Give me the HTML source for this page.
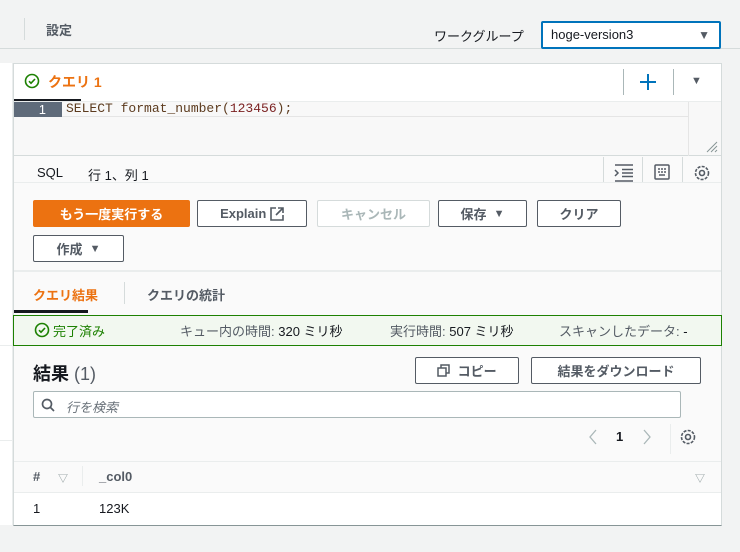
<!DOCTYPE html>
<html><head><meta charset="utf-8"><style>
*{box-sizing:border-box;margin:0;padding:0}
body{width:740px;height:552px;background:#f2f3f3;font-family:"Liberation Sans","Noto Sans CJK JP",sans-serif;color:#16191f;position:relative;overflow:hidden;font-size:13px}
.a{position:absolute}
.btn{position:absolute;border:1px solid #545b64;border-radius:2px;background:#fff;font-weight:bold;font-size:13px;display:flex;align-items:center;justify-content:center;color:#545b64}
.mono{font-family:"Liberation Mono",monospace}
</style></head><body>
<div class="a" style="left:0;top:0;width:740px;height:49px;border-bottom:1px solid #d5dbdb"></div>
<div class="a" style="left:24px;top:18px;width:1px;height:22px;background:#d5dbdb"></div>
<div class="a" style="left:46px;top:20px;font-size:13px;font-weight:bold;color:#545b64">設定</div>
<div class="a" style="left:434px;top:26px;font-size:13px">ワークグループ</div>
<div class="a" style="left:541px;top:21px;width:180px;height:28px;border:2px solid #0073bb;border-radius:2px;background:#fff;padding:0 8px;font-size:13px;line-height:24px">hoge-version3<span style="position:absolute;right:9px;top:0;font-size:12px;color:#545b64">▼</span></div>
<div class="a" style="left:0;top:63px;width:13px;height:462px;background:#fff;border-right:1px solid #eaeded"></div>
<div class="a" style="left:0;top:345px;width:13px;height:1px;background:#eaeded"></div>
<div class="a" style="left:0;top:440px;width:13px;height:1px;background:#eaeded"></div>
<div class="a" style="left:13px;top:63px;width:709px;height:463px;background:#fafafa;border:1px solid #d5dbdb;border-bottom-color:#879596"></div>
<!-- tabs -->
<div class="a" style="left:14px;top:64px;width:707px;height:38px;background:#fff;border-bottom:1px solid #eaeded"></div>
<svg class="a" style="left:24px;top:73px" width="16" height="16"><circle cx="8" cy="8" r="6.5" fill="none" stroke="#1d8102" stroke-width="1.6"/><path d="M5 8.2l2 2 4-4.2" fill="none" stroke="#1d8102" stroke-width="1.6"/></svg>
<div class="a" style="left:48px;top:72px;font-weight:bold;color:#ec7211;font-size:14px">クエリ 1</div>
<div class="a" style="left:14px;top:99px;width:67px;height:2px;background:#16191f"></div>
<div class="a" style="left:623px;top:69px;width:1px;height:26px;background:#aab7b8"></div>
<div class="a" style="left:673px;top:69px;width:1px;height:26px;background:#aab7b8"></div>
<svg class="a" style="left:640px;top:74px" width="16" height="16" stroke="#0073bb" stroke-width="2"><path d="M8 0v16M0 8h16"/></svg>
<div class="a" style="left:691px;top:75px;font-size:11px;color:#545b64">▼</div>
<!-- editor -->
<div class="a" style="left:14px;top:102px;width:707px;height:54px;background:#f8f8f8;border-bottom:1px solid #d5dbdb"></div>
<div class="a" style="left:14px;top:102px;width:48px;height:15px;background:#5f6b7a;color:#fff;font-size:13px;line-height:15px;text-align:right;padding-right:16px" >1</div>
<div class="a" style="left:62px;top:116px;width:626px;height:1px;background:#e5e5e5"></div>
<div class="a" style="left:688px;top:102px;width:1px;height:54px;background:#e5e5e5"></div>
<div class="a mono" style="left:66px;top:101px;font-size:13px;line-height:16px;color:#5c3b1e">SELECT format_number(<span style="color:#7a1f1f">123456</span>);</div>
<svg class="a" style="left:706px;top:141px" width="12" height="12" stroke="#879596" stroke-width="1"><path d="M1 11L11 1M5 11L11 5M9 11l2-2"/></svg>
<!-- status bar -->
<div class="a" style="left:37px;top:165px;font-size:13px">SQL</div>
<div class="a" style="left:88px;top:165px;font-size:13px">行 1、列 1</div>
<div class="a" style="left:603px;top:157px;width:1px;height:25px;background:#d5dbdb"></div>
<div class="a" style="left:642px;top:157px;width:1px;height:25px;background:#d5dbdb"></div>
<div class="a" style="left:682px;top:157px;width:1px;height:25px;background:#d5dbdb"></div>
<svg class="a" style="left:614px;top:164px" width="20" height="18" stroke="#545b64" stroke-width="1.5" fill="none"><path d="M1 1h18M8 5.5h11M8 9h11M8 12.5h11M1 17h18M1 6l3 3-3 3"/></svg>
<svg class="a" style="left:654px;top:164px" width="16" height="16" stroke="#545b64" stroke-width="1.5" fill="none"><rect x="1" y="1" width="14" height="14" rx="1"/><path d="M4 5h2M7 5h2M10 5h2M4 8h2M7 8h2M10 8h2M5 11h6"/></svg>
<svg class="a" style="left:693px;top:164px" width="18" height="18" fill="none" stroke="#545b64" stroke-width="1.6"><circle cx="9" cy="9" r="2.5"/><circle cx="9" cy="9" r="6.5" stroke-dasharray="3 1.3"/></svg>
<div class="a" style="left:14px;top:182px;width:707px;height:1px;background:#eaeded"></div>
<!-- buttons -->
<div class="btn" style="left:33px;top:200px;width:157px;height:27px;background:#ec7211;border-color:#ec7211;color:#fff">もう一度実行する</div>
<div class="btn" style="left:197px;top:200px;width:110px;height:27px;color:#545b64">Explain&nbsp;<svg width="14" height="14" fill="none" stroke="#545b64" stroke-width="1.6"><path d="M6 1H1v12h12V8M8 1h5v5M13 1L6 8"/></svg></div>
<div class="btn" style="left:317px;top:200px;width:113px;height:27px;border-color:#d5dbdb;color:#aab7b8">キャンセル</div>
<div class="btn" style="left:438px;top:200px;width:89px;height:27px">保存&nbsp;&nbsp;<span style="font-size:11px">▼</span></div>
<div class="btn" style="left:537px;top:200px;width:84px;height:27px">クリア</div>
<div class="btn" style="left:33px;top:235px;width:91px;height:27px">作成&nbsp;&nbsp;<span style="font-size:11px">▼</span></div>
<div class="a" style="left:14px;top:270px;width:707px;height:2px;background:#eaeded"></div>
<div class="a" style="left:33px;top:285px;font-weight:bold;color:#ec7211;font-size:13px">クエリ結果</div>
<div class="a" style="left:124px;top:282px;width:1px;height:22px;background:#d5dbdb"></div>
<div class="a" style="left:147px;top:285px;font-weight:bold;color:#545b64;font-size:13px">クエリの統計</div>
<div class="a" style="left:14px;top:310px;width:74px;height:3px;background:#16191f"></div>
<div class="a" style="left:13px;top:315px;width:709px;height:31px;background:#f2f8f0;border:1px solid #1d8102"></div>
<svg class="a" style="left:34px;top:322px" width="16" height="16"><circle cx="8" cy="8" r="6.5" fill="none" stroke="#1d8102" stroke-width="1.6"/><path d="M5 8.2l2 2 4-4.2" fill="none" stroke="#1d8102" stroke-width="1.6"/></svg>
<div class="a" style="left:53px;top:321px;color:#1d8102;font-size:13px">完了済み</div>
<div class="a" style="left:180px;top:321px;font-size:13px;color:#545b64">キュー内の時間: <span style="color:#16191f">320 ミリ秒</span></div>
<div class="a" style="left:390px;top:321px;font-size:13px;color:#545b64">実行時間: <span style="color:#16191f">507 ミリ秒</span></div>
<div class="a" style="left:559px;top:321px;font-size:13px;color:#545b64">スキャンしたデータ: <span style="color:#16191f">-</span></div>
<!-- results -->
<div class="a" style="left:33px;top:360px;font-size:18px;font-weight:bold">結果 <span style="font-weight:normal;color:#545b64">(1)</span></div>
<div class="btn" style="left:415px;top:357px;width:104px;height:27px;color:#545b64"><svg width="13" height="13" fill="none" stroke="#545b64" stroke-width="1.5"><rect x="1" y="4" width="8" height="8"/><path d="M4 4V1h8v8H9"/></svg>&nbsp;&nbsp;コピー</div>
<div class="btn" style="left:531px;top:357px;width:170px;height:27px;color:#545b64">結果をダウンロード</div>
<div class="a" style="left:33px;top:391px;width:648px;height:27px;border:1px solid #aab7b8;border-radius:2px;background:#fff"></div>
<svg class="a" style="left:41px;top:398px" width="14" height="14" fill="none" stroke="#545b64" stroke-width="1.7"><circle cx="6" cy="6" r="4.5"/><path d="M9.5 9.5L13 13"/></svg>
<div class="a" style="left:66px;top:397px;font-style:italic;color:#687078;font-size:13px">行を検索</div>
<svg class="a" style="left:588px;top:429px" width="10" height="16" fill="none" stroke="#aab7b8" stroke-width="1.3"><path d="M8 1L2 8l6 7"/></svg>
<div class="a" style="left:616px;top:429px;font-weight:bold;font-size:13px">1</div>
<svg class="a" style="left:642px;top:429px" width="10" height="16" fill="none" stroke="#aab7b8" stroke-width="1.3"><path d="M2 1l6 7-6 7"/></svg>
<div class="a" style="left:670px;top:424px;width:1px;height:30px;background:#eaeded"></div>
<svg class="a" style="left:679px;top:428px" width="18" height="18" fill="none" stroke="#545b64" stroke-width="1.6"><circle cx="9" cy="9" r="2.5"/><circle cx="9" cy="9" r="6.5" stroke-dasharray="3 1.3"/></svg>
<div class="a" style="left:14px;top:461px;width:707px;height:1px;background:#eaeded"></div>
<div class="a" style="left:14px;top:492px;width:707px;height:33px;background:#fff;border-top:1px solid #eaeded"></div>
<div class="a" style="left:33px;top:469px;font-weight:bold;font-size:13px;color:#545b64">#</div>
<div class="a" style="left:58px;top:470px;font-size:10px;color:#879596">▽</div>
<div class="a" style="left:82px;top:466px;width:1px;height:20px;background:#eaeded"></div>
<div class="a" style="left:99px;top:469px;font-weight:bold;font-size:13px;color:#545b64">_col0</div>
<div class="a" style="left:695px;top:470px;font-size:10px;color:#879596">▽</div>
<div class="a" style="left:33px;top:501px;font-size:13px">1</div>
<div class="a" style="left:99px;top:501px;font-size:13px">123K</div>
</body></html>
